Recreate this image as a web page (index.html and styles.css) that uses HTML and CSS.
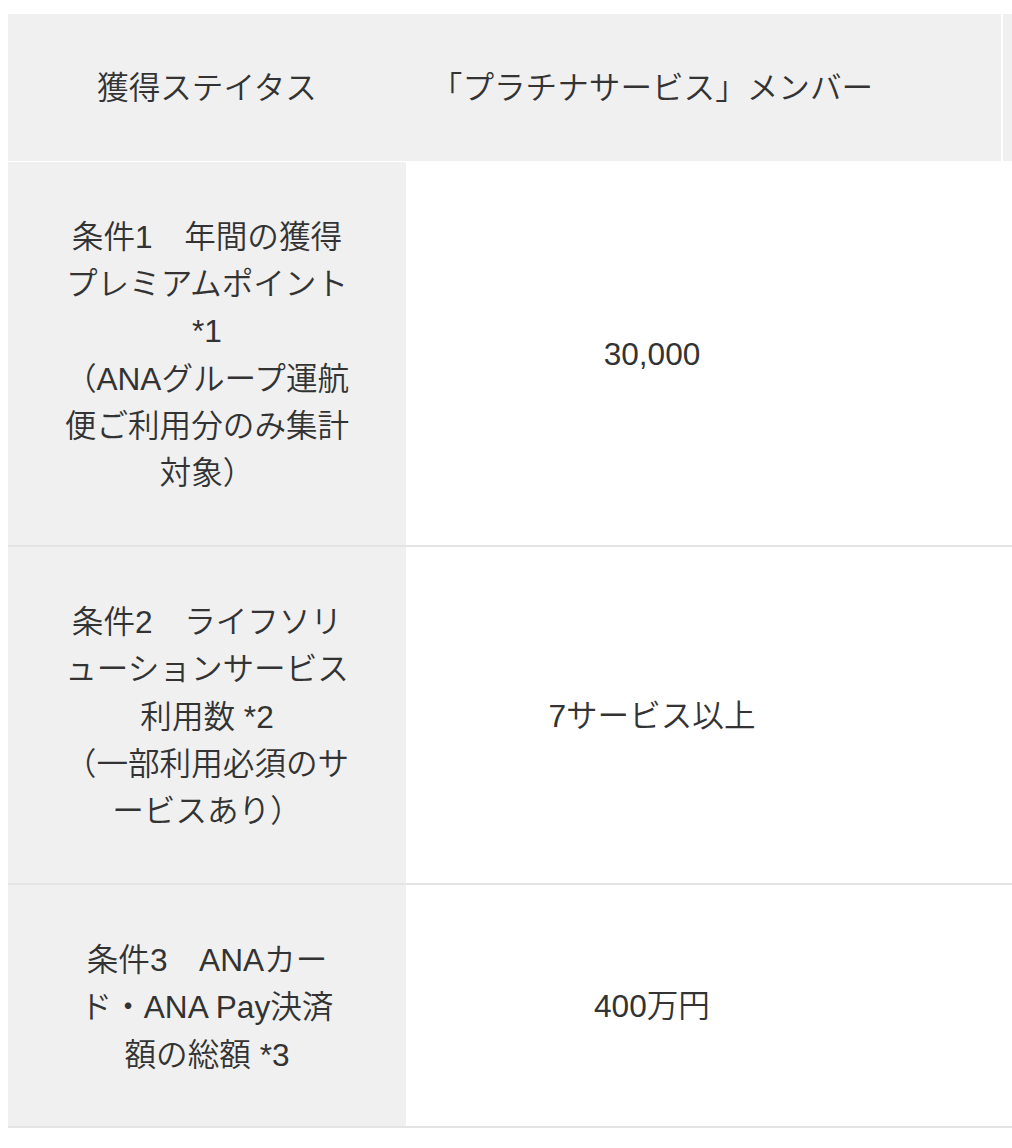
FILE: index.html
```html
<!DOCTYPE html>
<html lang="ja">
<head>
<meta charset="utf-8">
<title>獲得ステイタス</title>
<link rel="stylesheet" href="styles.css">
</head>
<body>
<div class="wrap">
  <div class="head">
    <div class="head-main">
      <div class="hc hc-label">獲得ステイタス</div>
      <div class="hc hc-value">「プラチナサービス」メンバー</div>
      <div class="hc hc-fill"></div>
    </div>
    <div class="head-next"></div>
  </div>
  <div class="row">
    <div class="cell-label">条件1　年間の獲得プレミアムポイント *1<br>（ANAグループ運航便ご利用分のみ集計対象）</div>
    <div class="cell-value">30,000</div>
  </div>
  <div class="row">
    <div class="cell-label">条件2　ライフソリューションサービス利用数 *2<br>（一部利用必須のサービスあり）</div>
    <div class="cell-value">7サービス以上</div>
  </div>
  <div class="row">
    <div class="cell-label">条件3　ANAカー<br>ド・ANA Pay決済<br>額の総額 *3</div>
    <div class="cell-value">400万円</div>
  </div>
</div>
</body>
</html>
```
FILE: styles.css
```css
html, body {
  background: #ffffff;
}
body {
  margin: 14px 0 0 8px;
  font-family: "Liberation Sans", "Noto Sans CJK JP", sans-serif;
  font-weight: 350;
  font-size: 31.6px;
  line-height: 1.5;
  color: #333333;
}
.wrap {
  overflow: hidden;
}
.head {
  display: flex;
  width: 1100px;
  height: 147px;
  margin-bottom: 1px;
}
.head-main {
  display: flex;
  width: 993px;
  background: #f0f0f0;
}
.head-next {
  flex: 1;
  margin-left: 2px;
  background: #f0f0f0;
}
.hc {
  display: flex;
  align-items: center;
  justify-content: center;
  text-align: center;
  padding-top: 3px;
}
.hc-label {
  width: 398px;
}
.hc-value {
  width: 492px;
}
.hc-fill {
  flex: 1;
}
.row {
  display: flex;
  width: 1100px;
  border-bottom: 2px solid #e4e4e4;
}
.cell-label {
  box-sizing: border-box;
  width: 398px;
  padding: 51.5px 50px 47.5px;
  background: #f0f0f0;
  text-align: center;
}
.cell-value {
  width: 492px;
  display: flex;
  align-items: center;
  justify-content: center;
  padding-top: 2px;
}
```
